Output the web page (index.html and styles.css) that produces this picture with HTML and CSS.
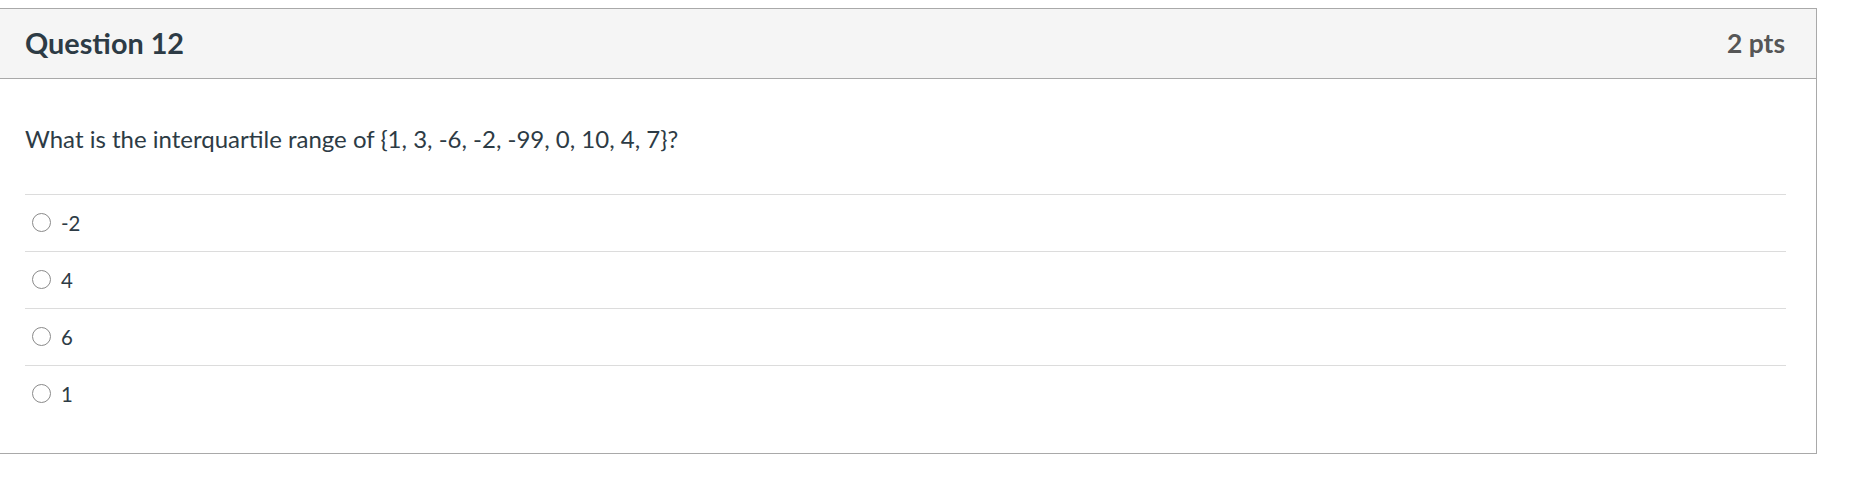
FILE: index.html
```html
<!DOCTYPE html>
<html lang="en">
<head>
<meta charset="utf-8">
<title>Question 12</title>
<link rel="stylesheet" href="styles.css">
</head>
<body>
<div class="question">
  <div class="q-header">
    <h2 class="q-title">Question 12</h2>
    <div class="q-points">2 pts</div>
  </div>
  <div class="q-body">
    <p class="q-text">What is the interquartile range of {1, 3, -6, -2, -99, 0, 10, 4, 7}?</p>
    <div class="answers">
      <label class="answer"><span class="radio"></span><span class="answer-text">-2</span></label>
      <label class="answer"><span class="radio"></span><span class="answer-text">4</span></label>
      <label class="answer"><span class="radio"></span><span class="answer-text">6</span></label>
      <label class="answer"><span class="radio"></span><span class="answer-text">1</span></label>
    </div>
  </div>
</div>
</body>
</html>
```

FILE: styles.css
```css
html, body {
  margin: 0;
  padding: 0;
  background: #ffffff;
}
body {
  padding-top: 8px;
  font-family: Lato, "Open Sans", "Liberation Sans", sans-serif;
  color: #2d3b45;
}
.question {
  width: 1817px;
  box-sizing: border-box;
  border: 1px solid #a9a9a9;
  border-left: none;
  background: #ffffff;
}
.q-header {
  height: 69px;
  background: #f5f5f5;
  border-bottom: 1px solid #a9a9a9;
  display: flex;
  align-items: center;
  justify-content: space-between;
  padding: 0 31px 0 25px;
}
.q-title {
  margin: 0;
  font-size: 28.8px;
  font-weight: 700;
  line-height: 1.2;
  color: #2d3b45;
}
.q-points {
  font-size: 26.4px;
  font-weight: 700;
  line-height: 1.2;
  color: #565656;
}
.q-body {
  padding: 46px 30px 31px 25px;
}
.q-text {
  margin: 0 0 40px 0;
  font-size: 24px;
  line-height: 1.2;
  color: #2d3b45;
}
.answers {
  display: flex;
  flex-direction: column;
}
.answer {
  display: flex;
  align-items: center;
  height: 56px;
  border-top: 1px solid #dcdcdc;
  padding-left: 7px;
  gap: 10px;
}
.radio {
  width: 17px;
  height: 17px;
  border: 1.5px solid #8a8a8a;
  border-radius: 50%;
  background: #fff;
  flex: none;
}
.answer-text {
  font-size: 20.4px;
  line-height: 1.2;
  color: #2d3b45;
}
```
